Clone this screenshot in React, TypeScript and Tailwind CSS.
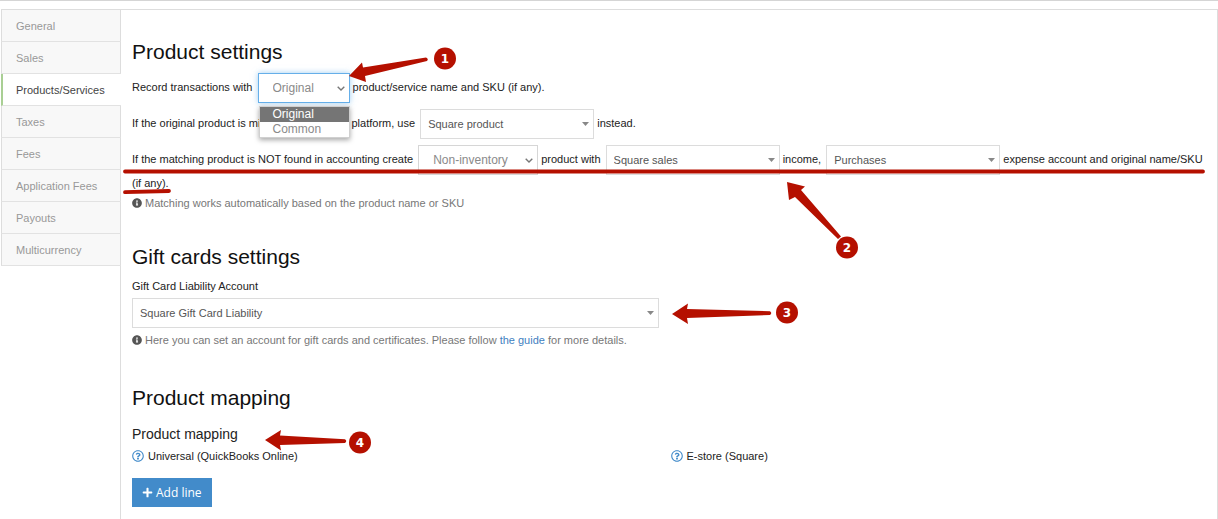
import type { ReactNode } from "react";
import { FaInfoCircle, FaPlus, FaRegQuestionCircle } from "react-icons/fa";

const tabs = [
  "General",
  "Sales",
  "Products/Services",
  "Taxes",
  "Fees",
  "Application Fees",
  "Payouts",
  "Multicurrency",
];

function NativeSelect({ label, options, focused, className }: {
  label: string;
  options: string[];
  focused?: boolean;
  className: string;
}) {
  return (
    <span className={`relative ml-[2px] inline-block h-[30px] align-middle ${className}`}>
      <select
        aria-label={label}
        className={`block h-full w-full appearance-none border bg-white pl-[14px] pr-5 text-xs text-[#8a8a8a] outline-none ${
          focused ? "border-[#66afe9] shadow-[0_0_6px_rgba(102,175,233,0.6)]" : "border-[#d6d6d6]"
        }`}
      >
        {options.map((o) => (
          <option key={o}>{o}</option>
        ))}
      </select>
      <svg viewBox="0 0 8 5" className="pointer-events-none absolute right-[5px] top-[13px] h-[5px] w-2">
        <path d="M0.7 0.7 4 4 7.3 0.7" fill="none" stroke="#777" strokeWidth="1.4" />
      </svg>
      {focused && (
        <ul
          role="listbox"
          aria-label={`${label} options`}
          className="absolute left-px right-0 top-[33px] z-10 border border-[#d0d0d0] bg-white text-xs leading-[15px] text-[#8a8a8a] shadow-[0_2px_5px_rgba(0,0,0,0.35)]"
        >
          {options.map((o, i) => (
            <li key={o} role="option" aria-selected={i === 0} className={i === 0 ? "bg-[#757575] pl-[13px] text-white" : "pl-[13px]"}>
              {o}
            </li>
          ))}
        </ul>
      )}
    </span>
  );
}

function AccountSelect({ id, label, value, className }: {
  id?: string;
  label?: string;
  value: string;
  className: string;
}) {
  return (
    <span className={`relative inline-block h-[30px] align-middle ${className}`}>
      <select
        id={id}
        aria-label={label}
        className="block h-full w-full appearance-none border border-[#dcdcdc] bg-white pl-[7px] pr-5 text-[#555] outline-none"
      >
        <option>{value}</option>
      </select>
      <svg viewBox="0 0 7 4" className="pointer-events-none absolute right-[5px] top-[13px] h-1 w-[7px]">
        <path d="M0 0H7L3.5 4Z" fill="#888" />
      </svg>
    </span>
  );
}

function Hint({ children }: { children: ReactNode }) {
  return (
    <p className="mt-1 leading-4 text-[#777]">
      <FaInfoCircle className="mr-[3px] inline-block size-[10px] align-[-1px] text-[#555]" />
      {children}
    </p>
  );
}

function Heading({ children }: { children: ReactNode }) {
  return <h2 className="text-[21px] leading-6 text-[#111]">{children}</h2>;
}

function Annotations() {
  const badges = [
    { n: 1, x: 445, y: 58 },
    { n: 2, x: 847, y: 247 },
    { n: 3, x: 787, y: 312 },
    { n: 4, x: 360, y: 442 },
  ];
  return (
    <svg width="1218" height="519" className="pointer-events-none absolute left-0 top-0 z-20" fill="#b51000">
      <path d="M125 170.500H1203M125 191.200L169 190" stroke="#b51000" strokeWidth="3.800" strokeLinecap="round" />
      <path d="M349 75 362 61.500 363 66.500 426 56.500Q429 58 427 60L365 75 366 81Z" />
      <path d="M787 181 805 185.500 801 189 841 235.500 838 238 795 196 789 199Z" />
      <path d="M672 313 688 302.500 687 308 770 310.200Q772.500 312 770 314L687 317 688 323Z" />
      <path d="M265 439 281 429 280 434.500 345 438.200Q347.500 440 345 442L280 444 281 449.500Z" />
      {badges.map((b) => (
        <g key={b.n}>
          <circle cx={b.x} cy={b.y - 0.500} r="11" />
          <text x={b.x} y={b.y + 4} textAnchor="middle" fill="#fff" className="font-['DejaVu_Sans',sans-serif] text-xs font-bold">
            {b.n}
          </text>
        </g>
      ))}
    </svg>
  );
}

export default function App() {
  return (
    <div className="relative min-h-screen overflow-hidden border-t border-[#d5d5d5] bg-white pl-px pt-2 font-['Liberation_Sans',Arial,sans-serif] text-[11px] leading-4 text-[#222]">
      <div className="flex min-h-[510px] border-r border-t border-[#ddd]">
        <nav className="flex w-[120px] shrink-0 flex-col">
          {tabs.map((t) => (
            <a
              key={t}
              href="#"
              className={`flex h-8 items-center border-b border-b-[#e2e2e2] ${
                t === "Products/Services"
                  ? "border-l-2 border-l-[#a9cf94] bg-white pl-[13px] text-[#444]"
                  : "border-l border-r border-l-[#ddd] border-r-[#ddd] bg-[#f8f8f8] pl-[14px] text-[#999]"
              }`}
            >
              {t}
            </a>
          ))}
          <div className="grow border-r border-[#ddd]" />
        </nav>

        <main className="min-w-0 grow pb-3 pl-[11px] pr-2 pt-[30px]">
          <section>
            <Heading>Product settings</Heading>
            <div className="mt-[9px] flex flex-col gap-[6px]">
              <p>
                <span>Record transactions with</span>{" "}
                <NativeSelect label="Name source" options={["Original", "Common"]} focused className="w-[92px]" />{" "}
                <span>product/service name and SKU (if any).</span>
              </p>
              <p>
                <span>If the original product is missing on the sales platform, use</span>{" "}
                <AccountSelect label="Fallback product" value="Square product" className="ml-[2px] w-[174px]" />{" "}
                <span>instead.</span>
              </p>
              <p>
                <span>If the matching product is NOT found in accounting create</span>{" "}
                <NativeSelect label="Product type" options={["Non-inventory"]} className="w-[120px]" />{" "}
                <span>product with</span>{" "}
                <AccountSelect label="Income account" value="Square sales" className="ml-[2px] w-[174px]" />{" "}
                <span>income,</span>{" "}
                <AccountSelect label="Expense account" value="Purchases" className="ml-[2px] w-[174px]" />{" "}
                <span>expense account and original name/SKU (if any).</span>
              </p>
            </div>
            <Hint>Matching works automatically based on the product name or SKU</Hint>
          </section>

          <section className="mt-[34px]">
            <Heading>Gift cards settings</Heading>
            <div className="mt-[9px] flex w-1/2 flex-col pr-3">
              <label htmlFor="gift-account" className="mb-1">
                Gift Card Liability Account
              </label>
              <AccountSelect id="gift-account" value="Square Gift Card Liability" className="w-full" />
            </div>
            <Hint>
              Here you can set an account for gift cards and certificates. Please follow{" "}
              <a href="#" className="text-[#3f7fc1]">
                the guide
              </a>{" "}
              for more details.
            </Hint>
          </section>

          <section className="mt-[38px]">
            <Heading>Product mapping</Heading>
            <h3 className="mt-[15px] text-sm leading-[18px] text-[#222]">Product mapping</h3>
            <div className="mt-[5px] grid grid-cols-2">
              {["Universal (QuickBooks Online)", "E-store (Square)"].map((c) => (
                <div key={c} className="flex items-center gap-1">
                  <FaRegQuestionCircle className="size-3 text-[#428bca]" />
                  {c}
                </div>
              ))}
            </div>
            <button
              type="button"
              className="mt-[14px] flex h-[29px] items-center gap-[3px] bg-[#428bca] px-[10px] font-['Open_Sans',sans-serif] text-xs text-white"
            >
              <FaPlus className="size-[11px]" />
              Add line
            </button>
          </section>
        </main>
      </div>
      <Annotations />
    </div>
  );
}
